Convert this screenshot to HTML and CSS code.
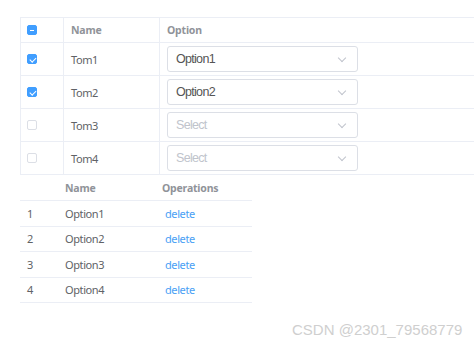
FILE: index.html
```html
<!DOCTYPE html>
<html lang="en">
<head>
  <meta charset="UTF-8">
  <title>Table Select</title>
  <link rel="stylesheet" href="styles.css">
</head>
<body>

  <!-- Selection table -->
  <table class="grid pick">
    <colgroup>
      <col class="c-check"><col class="c-name"><col>
    </colgroup>
    <thead>
      <tr>
        <th><span class="box half"></span></th>
        <th>Name</th>
        <th>Option</th>
      </tr>
    </thead>
    <tbody>
      <tr>
        <td><span class="box on"></span></td>
        <td>Tom1</td>
        <td><div class="select"><span class="value">Option1</span><span class="arrow"></span></div></td>
      </tr>
      <tr>
        <td><span class="box on"></span></td>
        <td>Tom2</td>
        <td><div class="select"><span class="value">Option2</span><span class="arrow"></span></div></td>
      </tr>
      <tr>
        <td><span class="box"></span></td>
        <td>Tom3</td>
        <td><div class="select"><span class="value empty">Select</span><span class="arrow"></span></div></td>
      </tr>
      <tr>
        <td><span class="box"></span></td>
        <td>Tom4</td>
        <td><div class="select"><span class="value empty">Select</span><span class="arrow"></span></div></td>
      </tr>
    </tbody>
  </table>

  <!-- Chosen options -->
  <table class="grid chosen">
    <colgroup>
      <col class="c-idx"><col class="c-opt"><col>
    </colgroup>
    <thead>
      <tr><th></th><th>Name</th><th>Operations</th></tr>
    </thead>
    <tbody>
      <tr><td>1</td><td>Option1</td><td><a class="link">delete</a></td></tr>
      <tr><td>2</td><td>Option2</td><td><a class="link">delete</a></td></tr>
      <tr><td>3</td><td>Option3</td><td><a class="link">delete</a></td></tr>
      <tr><td>4</td><td>Option4</td><td><a class="link">delete</a></td></tr>
    </tbody>
  </table>

  <div class="mark">CSDN @2301_79568779</div>

</body>
</html>
```

FILE: styles.css
```css
body { margin: 0; padding: 17px 0 0 20px; background: #fff; font-family: "Noto Sans", sans-serif; color: #606266; overflow: hidden; }

.grid { border-collapse: collapse; font-size: 11px; letter-spacing: -0.4px; }
.grid th { color: #909399; font-weight: bold; font-size: 10.5px; letter-spacing: -0.2px; text-align: left; }

.pick { width: 100%; table-layout: fixed; border-top: 1px solid #ebeef5; }
.pick .c-check { width: 43px; }
.pick .c-name { width: 96px; }
.pick th, .pick td { border-bottom: 1px solid #ebeef5; border-left: 1px solid #ebeef5; padding: 0 7px; }
.pick th { height: 24px; }
.pick td { height: 32px; }
.pick td:first-child, .pick th:first-child { padding-left: 6px; }

.box { display: block; width: 10px; height: 10px; box-sizing: border-box; border: 1px solid #dcdfe6; border-radius: 2px; background: #fff; position: relative; }
.box.on, .box.half { background: #409eff; border-color: #409eff; }
.box.on::after { content: ""; position: absolute; left: 2.5px; top: 0.5px; width: 2.5px; height: 5px; border: solid #fff; border-width: 0 1.2px 1.2px 0; transform: rotate(45deg); }
.box.half::after { content: ""; position: absolute; left: 2px; right: 2px; top: 3.5px; height: 1px; background: #fff; }

.select { width: 191px; height: 26px; box-sizing: border-box; border: 1px solid #dcdfe6; border-radius: 3px; display: flex; align-items: center; justify-content: space-between; padding: 0 12px 0 8px; font-family: "Liberation Sans", Arial, sans-serif; font-size: 12.5px; letter-spacing: -0.7px; color: #555; }
.select .empty { color: #c0c4cc; }
.arrow { width: 5px; height: 5px; border: solid #c0c4cc; border-width: 0 1px 1px 0; transform: rotate(45deg); margin-top: -3px; }

.chosen { width: 232px; }
.chosen .c-idx { width: 38px; }
.chosen .c-opt { width: 97px; }
.chosen th, .chosen td { border-bottom: 1px solid #ebeef5; padding: 0 7px; }
.chosen th { height: 25px; }
.chosen td { height: 24.5px; }
.link { color: #4a9ff5; padding-left: 3px; }

.mark { position: absolute; left: 292px; top: 321px; white-space: nowrap; font-family: "Liberation Sans", Arial, sans-serif; font-size: 15px; color: #cfcfcf; }
```
